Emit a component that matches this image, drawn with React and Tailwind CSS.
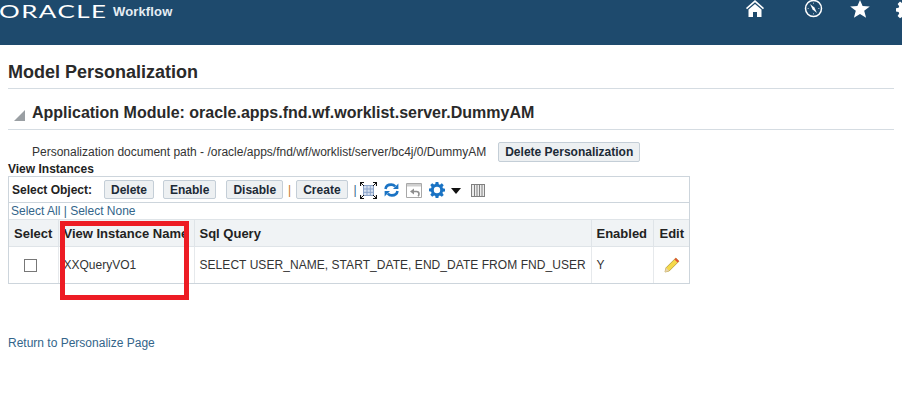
import { useState } from 'react'

// Small toolbar button used on the personalization page
function Btn({ children, className = '' }) {
    return (
        <button className={`h-[19px] px-[6px] rounded-[2px] border border-[#c4ced7] bg-[#edf0f2] text-[12px] leading-[16px] font-bold text-[#1c2a36] whitespace-nowrap ${className}`}>
            {children}
        </button>
    )
}

function HomeIcon() {
    return (
        <svg width="18" height="18" viewBox="0 0 18 18" fill="#fff">
            <path d="M9 0 L18 8 L17 9.2 L9 2.2 L1 9.2 L0 8 Z" />
            <path d="M9 4 L15.5 9.6 V17 H11 V12 H7 V17 H2.5 V9.6 Z" />
        </svg>
    )
}

function CompassIcon() {
    return (
        <svg width="19" height="18" viewBox="0 0 19 18" fill="none">
            <circle cx="9.5" cy="8.5" r="8" stroke="#fff" strokeWidth="1.5" />
            <path d="M6 4 L10.4 7.6 L13 13 L8.6 9.4 Z" fill="#fff" />
            <path d="M9.5 2.5v1.5M9.5 13v1.5M3.5 8.5H5M14 8.5h1.5" stroke="#fff" strokeWidth=".7" opacity=".7" />
        </svg>
    )
}

function StarIcon() {
    return (
        <svg width="20" height="18" viewBox="0 0 20 18" fill="#fff">
            <path d="M10 0 L12.6 6 L19.8 6.4 L14.2 10.8 L16.1 17.8 L10 14 L3.9 17.8 L5.8 10.8 L0.2 6.4 L7.4 6 Z" />
        </svg>
    )
}

function GearIcon({ size = 20, color = '#fff' }) {
    return (
        <svg width={size} height={size} viewBox="0 0 20 20">
            <path
                fill={color}
                fillRule="evenodd"
                d="M8.3 0h3.4l.5 2.7 1.5.6 2.3-1.6 2.4 2.4-1.6 2.3.6 1.5 2.6.5v3.4l-2.6.5-.6 1.5 1.6 2.3-2.4 2.4-2.3-1.6-1.5.6-.5 2.7H8.3l-.5-2.7-1.5-.6L4 18.3l-2.4-2.4 1.6-2.3-.6-1.5L0 11.6V8.2l2.6-.5.6-1.5L1.6 3.9 4 1.5l2.3 1.6 1.5-.6zM10 6a4 4 0 1 0 0 8 4 4 0 0 0 0-8z"
            />
        </svg>
    )
}

function ToolbarIcons() {
    return (
        <div className="flex items-center mt-[1px]">
            {/* detach table */}
            <svg width="17" height="17" viewBox="0 0 17 17" fill="none" className="ml-[3px]">
                <rect x="3.5" y="3.5" width="10" height="10" fill="#d5e0f0" stroke="#8ba3c9" />
                <path d="M3.5 7h10M3.5 10.3h10M7 3.5v10M10.3 3.5v10" stroke="#8ba3c9" />
                <path d="M.5 4V.5H4M13 .5h3.5V4M.5 13v3.5H4M13 16.5h3.5V13" stroke="#111" strokeWidth="1.2" />
                <path d="M1 1l3 3M16 1l-3 3M1 16l3-3M16 16l-3-3" stroke="#111" />
            </svg>
            {/* refresh */}
            <svg width="15" height="14" viewBox="0 0 15 14" fill="none" className="ml-[7px]">
                <path d="M1.5 6C2 3 4.5 1.6 7.2 1.6c1.8 0 3 .7 4 1.8" stroke="#1a73c4" strokeWidth="2.6" />
                <path d="M14.4.6V6H9z" fill="#1a73c4" />
                <path d="M13.5 8c-.5 3-3 4.4-5.7 4.4-1.8 0-3-.7-4-1.8" stroke="#1a73c4" strokeWidth="2.6" />
                <path d="M.6 13.4V8H6z" fill="#1a73c4" />
            </svg>
            {/* revert */}
            <svg width="16" height="15" viewBox="0 0 16 15" fill="none" className="ml-[7px]">
                <path d="M.5 14.5V.5h15v14z" stroke="#a8a8a8" />
                <path d="M1 1h14v2.5H1z" fill="#cfcfcf" />
                <path d="M7 8.5h3.5c1.6 0 2.5 1 2.5 2.4 0 1-.4 1.7-1 2.3" stroke="#8f8f8f" strokeWidth="1.6" />
                <path d="M8 5.5v6L4 8.5z" fill="#8f8f8f" />
            </svg>
            {/* view menu */}
            <span className="ml-[7px]">
                <GearIcon size={16} color="#1a73c4" />
            </span>
            <svg width="10" height="6" viewBox="0 0 10 6" className="ml-[6px] mt-[2px]">
                <path d="M0 0h10L5 6z" fill="#111" />
            </svg>
            {/* columns */}
            <svg width="14" height="13" viewBox="0 0 14 13" fill="none" className="ml-[10px]">
                <rect x=".5" y=".5" width="13" height="12" fill="#ececec" stroke="#808080" />
                <path d="M3.5 1v11M6 1v11M8.5 1v11M11 1v11" stroke="#808080" />
            </svg>
        </div>
    )
}

export default function App() {
    const [checked, setChecked] = useState(false)

    return (
        <div className="relative w-[902px] h-[416px] overflow-hidden bg-white font-['Liberation_Sans',Arial,sans-serif] text-[#333]">
            {/* Branding bar */}
            <header className="h-[45px] bg-[#1e4a6d] flex items-start overflow-hidden">
                <div className="flex items-start w-[746px] shrink-0">
                    <div className="w-[113px] shrink-0 pt-[1px] -ml-[1px] mr-[1px]">
                        <span className="inline-block text-[18px] leading-[18px] font-['Lato',sans-serif] font-normal text-white tracking-[1px] scale-x-[1.44] origin-left">
                            ORACLE
                        </span>
                    </div>
                    <span className="text-[13px] leading-[15px] mt-[4px] font-bold text-[#e6edf3] tracking-[0.15px]">Workflow</span>
                </div>
                <nav className="flex items-start">
                    <HomeIcon />
                    <span className="ml-[40px]"><CompassIcon /></span>
                    <span className="ml-[27px]"><StarIcon /></span>
                    <span className="ml-[26px]"><GearIcon /></span>
                </nav>
            </header>

            {/* Page title */}
            <div className="mx-[8px] mt-[16px] h-[28px] border-b border-[#d5dce2]">
                <h1 className="text-[18px] leading-[22px] font-bold text-[#2a2a2a]">Model Personalization</h1>
            </div>

            {/* Section header */}
            <div className="mx-[8px] mt-[13px] h-[28px] border-b border-[#d5dce2] flex items-start">
                <svg width="11" height="11" viewBox="0 0 11 11" className="ml-[6px] mt-[8px]">
                    <path d="M11 0v11H0z" fill="#9a9fa3" />
                </svg>
                <h2 className="ml-[7px] text-[16px] leading-[22px] font-bold text-[#2a2a2a]">
                    Application Module: oracle.apps.fnd.wf.worklist.server.DummyAM
                </h2>
            </div>

            {/* Document path */}
            <div className="mt-[12px] ml-[32px] h-[20px] flex items-center text-[12px]">
                <span>Personalization document path - /oracle/apps/fnd/wf/worklist/server/bc4j/0/DummyAM</span>
                <Btn className="ml-[12px] h-[20px]">Delete Personalization</Btn>
            </div>

            {/* View instances */}
            <div className="ml-[8px] w-[682px]">
                <div className="text-[12px] leading-[14px] font-bold text-[#222]">View Instances</div>
                <div className="border border-[#cdd5dc]">
                    <div className="h-[26px] flex items-center pl-[3px] border-b border-[#cdd5dc]">
                        <span className="text-[12px] font-bold text-[#222] w-[92px]">Select Object:</span>
                        <Btn>Delete</Btn>
                        <Btn className="ml-[9px]">Enable</Btn>
                        <Btn className="ml-[10px]">Disable</Btn>
                        <span className="mx-[5px] text-[12px] text-[#c77b2e]">|</span>
                        <Btn>Create</Btn>
                        <span className="ml-[6px] text-[12px] text-[#33658a]">|</span>
                        <ToolbarIcons />
                    </div>
                    <div className="h-[16px] pl-[2px] text-[12px] leading-[16px] text-[#33658a]">
                        Select All | Select None
                    </div>
                    <table className="w-full border-collapse text-[12px]">
                        <thead>
                            <tr className="h-[27px] bg-[#f0f3f5] text-left font-bold text-[13px] text-[#222]">
                                <th className="w-[49px] border-y border-[#dfe4e8] text-center pt-[1px]">Select</th>
                                <th className="w-[136px] border border-[#dfe4e8] pl-[5px] pt-[1px] whitespace-nowrap">View Instance Name</th>
                                <th className="border border-[#dfe4e8] pl-[5px] pt-[1px]">Sql Query</th>
                                <th className="w-[62px] border border-[#dfe4e8] pl-[5px] pt-[1px]">Enabled</th>
                                <th className="w-[36px] border-y border-[#dfe4e8] pl-[6px] pt-[1px]">Edit</th>
                            </tr>
                        </thead>
                        <tbody>
                            <tr className="h-[36px]">
                                <td className="text-center pr-[6px]">
                                    <input
                                        type="checkbox"
                                        checked={checked}
                                        onChange={(e) => setChecked(e.target.checked)}
                                        className="appearance-none align-middle w-[13px] h-[13px] border border-[#777] bg-white"
                                    />
                                </td>
                                <td className="border-x border-[#e6e9ec] pl-[5px]">XXQueryVO1</td>
                                <td className="border-x border-[#e6e9ec] pl-[5px] whitespace-nowrap tracking-[0.05px]">
                                    SELECT USER_NAME, START_DATE, END_DATE FROM FND_USER
                                </td>
                                <td className="border-x border-[#e6e9ec] pl-[5px]">Y</td>
                                <td className="pl-[10px]">
                                    <svg width="16" height="16" viewBox="0 0 16 16" fill="none">
                                        <path d="M1 15l1-4.2L11.8 1l3.2 3.2L5.2 14z" fill="#f5d94a" stroke="#a88f2c" strokeWidth=".7" />
                                        <path d="M11.8 1L15 4.2l-1.4 1.4-3.2-3.2z" fill="#e2513a" />
                                        <path d="M1 15l1-4.2 3.2 3.2z" fill="#e8d3b0" />
                                    </svg>
                                </td>
                            </tr>
                        </tbody>
                    </table>
                </div>
            </div>

            <a href="#" className="block ml-[8px] mt-[51px] text-[12px] leading-[16px] text-[#33658a]">
                Return to Personalize Page
            </a>

            {/* Red highlight drawn over the column */}
            <div className="absolute left-[60px] top-[221px] w-[129px] h-[79px] border-[5px] border-[#ed1c24]" />
        </div>
    )
}
